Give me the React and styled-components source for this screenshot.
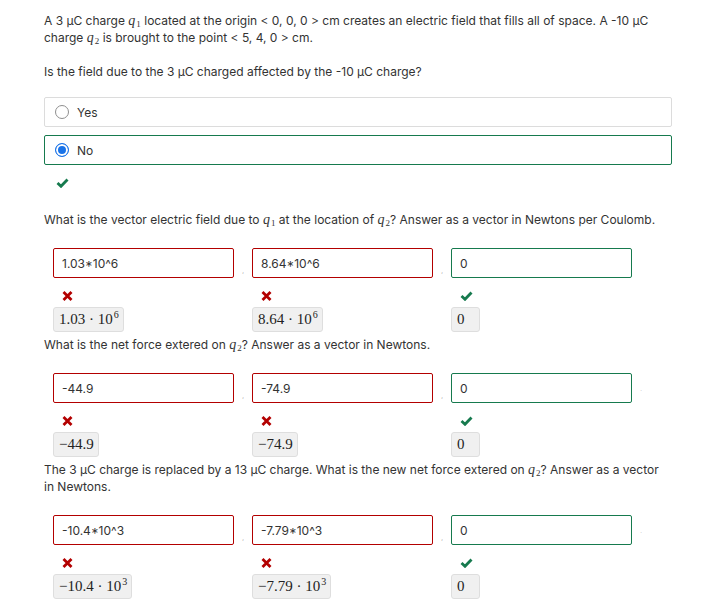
import React from 'react'
import styled, { createGlobalStyle } from 'styled-components'

const GlobalStyle = createGlobalStyle`
  body {
    margin: 0;
    background: #fff;
    font-family: Inter, "Noto Sans", sans-serif;
    font-size: 12px;
    color: #333;
  }
`

function getRows() {
  return [
    {
      question: (
        <>
          What is the vector electric field due to <Var>q<sub>1</sub></Var> at the location of{' '}
          <Var>q<sub>2</sub></Var>? Answer as a vector in Newtons per Coulomb.
        </>
      ),
      trailing: false,
      cells: [
        { input: '1.03*10^6', ok: false, answer: <>1.03 · 10<sup>6</sup></> },
        { input: '8.64*10^6', ok: false, answer: <>8.64 · 10<sup>6</sup></> },
        { input: '0', ok: true, answer: '0' },
      ],
    },
    {
      question: (
        <>
          What is the net force extered on <Var>q<sub>2</sub></Var>? Answer as a vector in Newtons.
        </>
      ),
      trailing: true,
      cells: [
        { input: '-44.9', ok: false, answer: '−44.9' },
        { input: '-74.9', ok: false, answer: '−74.9' },
        { input: '0', ok: true, answer: '0' },
      ],
    },
    {
      question: (
        <>
          The 3 μC charge is replaced by a 13 μC charge. What is the new net force extered on{' '}
          <Var>q<sub>2</sub></Var>? Answer as a vector in Newtons.
        </>
      ),
      trailing: true,
      cells: [
        { input: '-10.4*10^3', ok: false, answer: <>−10.4 · 10<sup>3</sup></> },
        { input: '-7.79*10^3', ok: false, answer: <>−7.79 · 10<sup>3</sup></> },
        { input: '0', ok: true, answer: '0' },
      ],
    },
  ]
}

function CheckIcon() {
  return (
    <svg width="13" height="10" viewBox="0 0 13 10">
      <polyline points="1.5,5 5,8.3 11.5,1.5" fill="none" stroke="#167a4e" strokeWidth="2.8" strokeLinejoin="miter" />
    </svg>
  )
}

function CrossIcon() {
  return (
    <svg width="11" height="10" viewBox="0 0 11 10">
      <path d="M1.5 1 L9.5 9 M9.5 1 L1.5 9" stroke="#b30000" strokeWidth="2.8" />
    </svg>
  )
}

function App() {
  const rows = getRows()
  return (
    <Page>
      <GlobalStyle />
      <Text>
        A 3 μC charge <Var>q<sub>1</sub></Var> located at the origin &lt; 0, 0, 0 &gt; cm creates an electric
        field that fills all of space. A -10 μC charge <Var>q<sub>2</sub></Var> is brought to the point &lt; 5, 4,
        0 &gt; cm.
      </Text>
      <Text>Is the field due to the 3 μC charged affected by the -10 μC charge?</Text>

      <Options>
        <Option>
          <Radio type="radio" name="affected" readOnly />
          Yes
        </Option>
        <Option $correct>
          <Radio type="radio" name="affected" checked readOnly />
          No
        </Option>
      </Options>
      <ChoiceFeedback>
        <CheckIcon />
      </ChoiceFeedback>

      {rows.map((row, i) => (
        <Block key={i} $first={i === 0}>
          <Question>{row.question}</Question>
          <VectorRow>
            {row.cells.map((cell, j) => (
              <React.Fragment key={j}>
                {j > 0 && <Separator>,</Separator>}
                <Cell>
                  <Field $ok={cell.ok}>{cell.input}</Field>
                  <Mark>{cell.ok ? <CheckIcon /> : <CrossIcon />}</Mark>
                  <Answer>
                    <span>{cell.answer}</span>
                  </Answer>
                </Cell>
              </React.Fragment>
            ))}
            {row.trailing && <Trailing>.</Trailing>}
          </VectorRow>
        </Block>
      ))}
    </Page>
  )
}

export default App

const Page = styled.div`
  width: 628px;
  padding: 12px 0 0 44px;
`

const Text = styled.p`
  margin: 0 0 17px;
  line-height: 17px;
`

const Var = styled.span`
  font-family: "Liberation Serif", "DejaVu Serif", serif;
  font-style: italic;
  font-size: 14px;
  line-height: 0;

  sub {
    font-style: normal;
    font-size: 9px;
    line-height: 0;
    vertical-align: -2px;
    margin-left: 1px;
  }
`

const Options = styled.div`
  display: flex;
  flex-direction: column;
  gap: 8px;
`

const Option = styled.label`
  box-sizing: border-box;
  display: flex;
  align-items: center;
  gap: 8px;
  height: 30px;
  padding: 0 10px;
  border: 1px solid ${(p) => (p.$correct ? '#167a4e' : '#dcdcdc')};
  border-radius: 2px;
  font-size: 12px;
  color: #333;
`

const Radio = styled.input`
  appearance: none;
  margin: 0;
  width: 14px;
  height: 14px;
  border-radius: 50%;
  border: 1px solid #8f8f8f;
  background: #fff;

  &:checked {
    border: 1.5px solid #1a73e8;
    background: #1a73e8;
    box-shadow: inset 0 0 0 2px #fff;
  }
`

const ChoiceFeedback = styled.div`
  display: flex;
  height: 10px;
  margin: 13px 0 0 12px;
`

const Block = styled.div`
  margin-top: ${(p) => (p.$first ? '23px' : '4px')};
`

const Question = styled.p`
  width: 624px;
  margin: 0;
  line-height: 17px;
`

const VectorRow = styled.div`
  display: flex;
  align-items: flex-start;
  margin: 20px 0 0 9px;
`

const Cell = styled.div`
  display: flex;
  flex-direction: column;
  align-items: flex-start;
  width: 181px;
`

const Field = styled.div`
  box-sizing: border-box;
  width: 100%;
  height: 30px;
  display: flex;
  align-items: center;
  padding: 0 8px;
  border: 1px solid ${(p) => (p.$ok ? '#167a4e' : '#b30000')};
  border-radius: 2px;
  font-size: 12px;
  color: #333;
`

const Separator = styled.span`
  width: 18px;
  height: 30px;
  display: flex;
  align-items: flex-end;
  justify-content: center;
  padding-bottom: 4px;
  box-sizing: border-box;
  font-size: 6px;
  color: #999;
`

const Trailing = styled.span`
  width: 18px;
  height: 30px;
  display: flex;
  align-items: center;
  justify-content: center;
  font-size: 6px;
  color: #aaa;
`

const Mark = styled.div`
  display: flex;
  height: 10px;
  margin: 13px 0 0 9px;
`

const Answer = styled.div`
  margin-top: 6px;
  box-sizing: border-box;
  min-width: 29px;
  height: 25px;
  display: flex;
  align-items: center;
  padding: 0 4px 0 5px;
  background: #f0f0f0;
  border: 1px solid #dedede;
  border-radius: 3px;
  font-family: "Liberation Serif", "DejaVu Serif", serif;
  font-size: 15px;
  color: #222;
  white-space: nowrap;

  sup {
    font-size: 10px;
    vertical-align: 6px;
    line-height: 0;
    margin-left: 1px;
  }
`
